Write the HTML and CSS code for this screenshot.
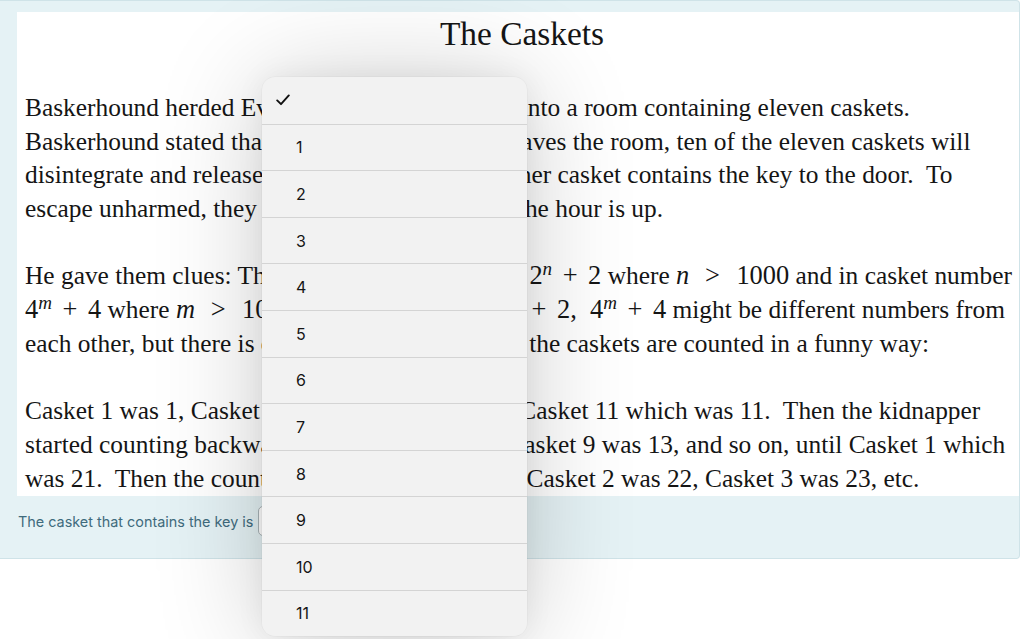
FILE: index.html
```html
<!DOCTYPE html>
<html>
<head>
<meta charset="utf-8">
<link rel="stylesheet" href="styles.css">
</head>
<body>
<div class="panel">
  <div class="figure">
    <h1 class="title">The Caskets</h1>
    <p class="para">Baskerhound herded Everett and his two friends into a room containing eleven caskets.<br>Baskerhound stated that after an hour when he leaves the room, ten of the eleven caskets will<br>disintegrate and release poisonous fumes. The other casket contains the key to the door.&nbsp; To<br>escape unharmed, they must find the key before the hour is up.</p>
    <p class="para">He gave them clues: The key is in casket number <span class="m">2<sup><i>n</i></sup><span class="op">+</span>2</span> where <span class="m"><i>n</i><span class="rel">&gt;</span>1000</span> and in casket number<br><span class="m">4<sup><i>m</i></sup><span class="op">+</span>4</span> where <span class="m"><i>m</i><span class="rel">&gt;</span>1000.</span> Also, the numbers <span class="m">2<sup><i>n</i></sup><span class="op">+</span>2,&nbsp; 4<sup><i>m</i></sup><span class="op">+</span>4</span> might be different numbers from<br>each other, but there is only one answer, since all the caskets are counted in a funny way:</p>
    <p class="para">Casket 1 was 1, Casket 2 was 2, and so on, until Casket 11 which was 11.&nbsp; Then the kidnapper<br>started counting backwards: Casket 10 was 12, Casket 9 was 13, and so on, until Casket 1 which<br>was 21.&nbsp; Then the counting went forwards again: Casket 2 was 22, Casket 3 was 23, etc.</p>
  </div>
  <div class="answer">
    <span class="label">The casket that contains the key is</span>
    <span class="select"></span>
  </div>
</div>
<div class="popup">
  <div class="opt sel"><svg class="check" width="14" height="12" viewBox="0 0 14 12"><polyline points="1.2,6.4 5,10.2 12.8,1.4" fill="none" stroke="#111" stroke-width="1.9" stroke-linecap="round" stroke-linejoin="round"/></svg></div>
  <div class="opt">1</div>
  <div class="opt">2</div>
  <div class="opt">3</div>
  <div class="opt">4</div>
  <div class="opt">5</div>
  <div class="opt">6</div>
  <div class="opt">7</div>
  <div class="opt">8</div>
  <div class="opt">9</div>
  <div class="opt">10</div>
  <div class="opt">11</div>
</div>
</body>
</html>
```
FILE: styles.css
```css
body {
  margin: 0;
  background: #ffffff;
  font-family: "Liberation Serif", "Times New Roman", serif;
}

.panel {
  width: 1020px;
  height: 559px;
  box-sizing: border-box;
  background: #e5f2f5;
  border: 1px solid #cfe3e8;
  border-left: none;
  border-radius: 0 4px 4px 0;
  padding: 11px 0 0 17px;
}

.figure {
  height: 484px;
  background: #ffffff;
  padding-left: 8px;
  overflow: hidden;
  color: #151515;
}

.title {
  margin: 0;
  padding-top: 2px;
  font-size: 33.4px;
  font-weight: normal;
  line-height: 40px;
  text-align: center;
}

.para {
  margin: 33.5px 0 0 0;
  font-size: 25.4px;
  line-height: 33.8px;
  white-space: nowrap;
}

.title + .para {
  margin-top: 36.8px;
}

.m {
  font-size: 1.04em;
}

.m i {
  font-style: italic;
}

.m sup {
  font-size: 0.72em;
  line-height: 0;
  vertical-align: 0.45em;
}

.op {
  margin: 0 0.4em;
}

.rel {
  margin: 0 0.62em 0 0.6em;
}

.answer {
  display: flex;
  align-items: center;
  gap: 5px;
  margin-top: 10px;
  height: 30px;
}

.label {
  font-family: Inter, "Liberation Sans", sans-serif;
  font-size: 14.4px;
  color: #3f6b7d;
  padding-left: 1px;
}

.select {
  width: 180px;
  height: 30px;
  box-sizing: border-box;
  border: 1px solid #a9b4b8;
  border-radius: 5px;
  background: #ffffff;
}

.popup {
  position: absolute;
  left: 262px;
  top: 77px;
  width: 265px;
  border-radius: 13px;
  background: #f2f2f2;
  overflow: hidden;
  box-shadow: 0 0 0 0.5px rgba(0, 0, 0, 0.04), 0 0 30px rgba(0, 0, 0, 0.06), 0 4px 110px rgba(0, 0, 0, 0.2);
}

.opt {
  height: 46.6px;
  box-sizing: border-box;
  display: flex;
  align-items: center;
  padding-left: 34px;
  border-top: 1px solid #d4d4d4;
  font-family: Inter, "Liberation Sans", sans-serif;
  font-size: 16px;
  color: #151515;
}

.opt.sel {
  border-top: none;
  padding-left: 14px;
}

.check {
  display: block;
}
```
